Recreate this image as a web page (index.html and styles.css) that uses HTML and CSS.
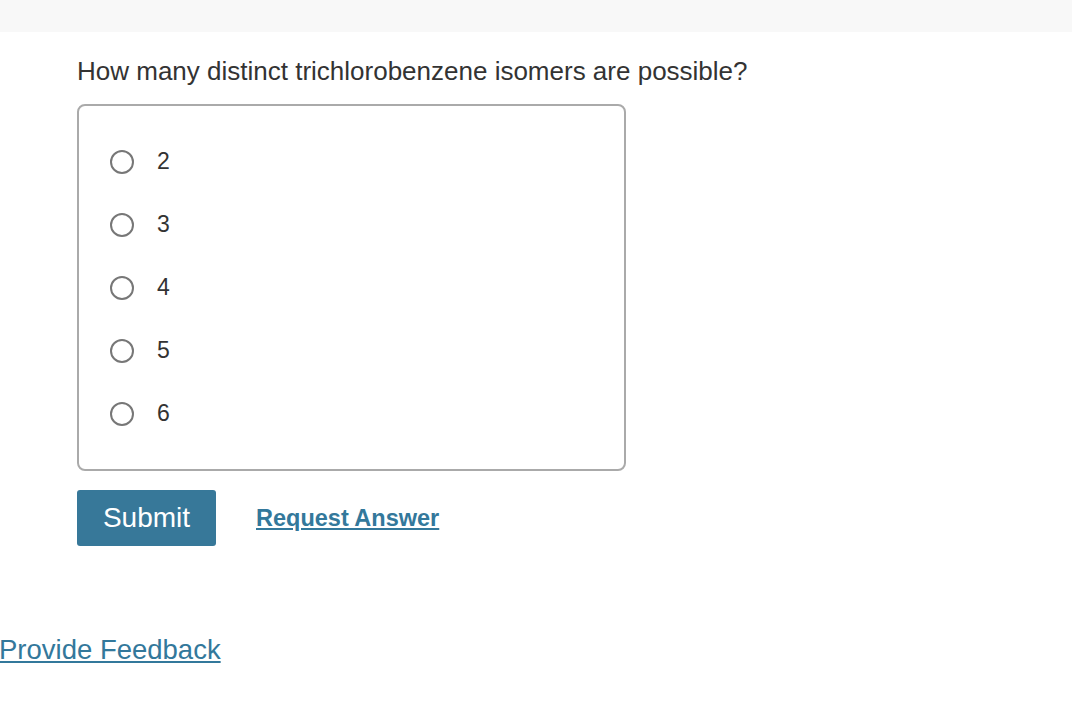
FILE: index.html
```html
<!DOCTYPE html>
<html>
<head>
    <title>Question</title>
    <link rel="stylesheet" href="styles.css">
</head>
<body>
    <div class="top-bar"></div>
    <div class="question">
        <p class="prompt">How many distinct trichlorobenzene isomers are possible?</p>
        <div class="choices">
            <label class="choice"><span class="radio"></span>2</label>
            <label class="choice"><span class="radio"></span>3</label>
            <label class="choice"><span class="radio"></span>4</label>
            <label class="choice"><span class="radio"></span>5</label>
            <label class="choice"><span class="radio"></span>6</label>
        </div>
        <div class="actions">
            <button class="submit">Submit</button>
            <a href="#" class="request">Request Answer</a>
        </div>
    </div>
    <a href="#" class="feedback">Provide Feedback</a>
</body>
</html>
```

FILE: styles.css
```css
body {
    margin: 0;
    font-family: "Liberation Sans", Arial, sans-serif;
    color: #333;
    background: #fff;
}
.top-bar {
    height: 32px;
    background-color: #f8f8f8;
}
.question {
    padding-left: 77px;
}
.prompt {
    margin: 0;
    padding-top: 23px;
    font-size: 26px;
    line-height: 32px;
}
.choices {
    box-sizing: border-box;
    width: 549px;
    margin-top: 17px;
    border: 2px solid #aaa;
    border-radius: 8px;
    padding: 24px 0 24px 31px;
}
.choice {
    display: flex;
    align-items: center;
    height: 63px;
    font-size: 23px;
}
.radio {
    width: 24px;
    height: 24px;
    border: 2px solid #777;
    border-radius: 50%;
    margin-right: 23px;
    box-sizing: border-box;
}
.actions {
    display: flex;
    align-items: center;
    margin-top: 19px;
}
.submit {
    width: 139px;
    height: 56px;
    background-color: #377899;
    color: #fff;
    border: none;
    border-radius: 3px;
    font-family: inherit;
    font-size: 28px;
    cursor: pointer;
}
.request {
    margin-left: 40px;
    font-size: 23.5px;
    font-weight: bold;
    color: #33789b;
}
.feedback {
    display: inline-block;
    margin-top: 88px;
    margin-left: -1px;
    font-size: 27.5px;
    color: #33789b;
}
```
